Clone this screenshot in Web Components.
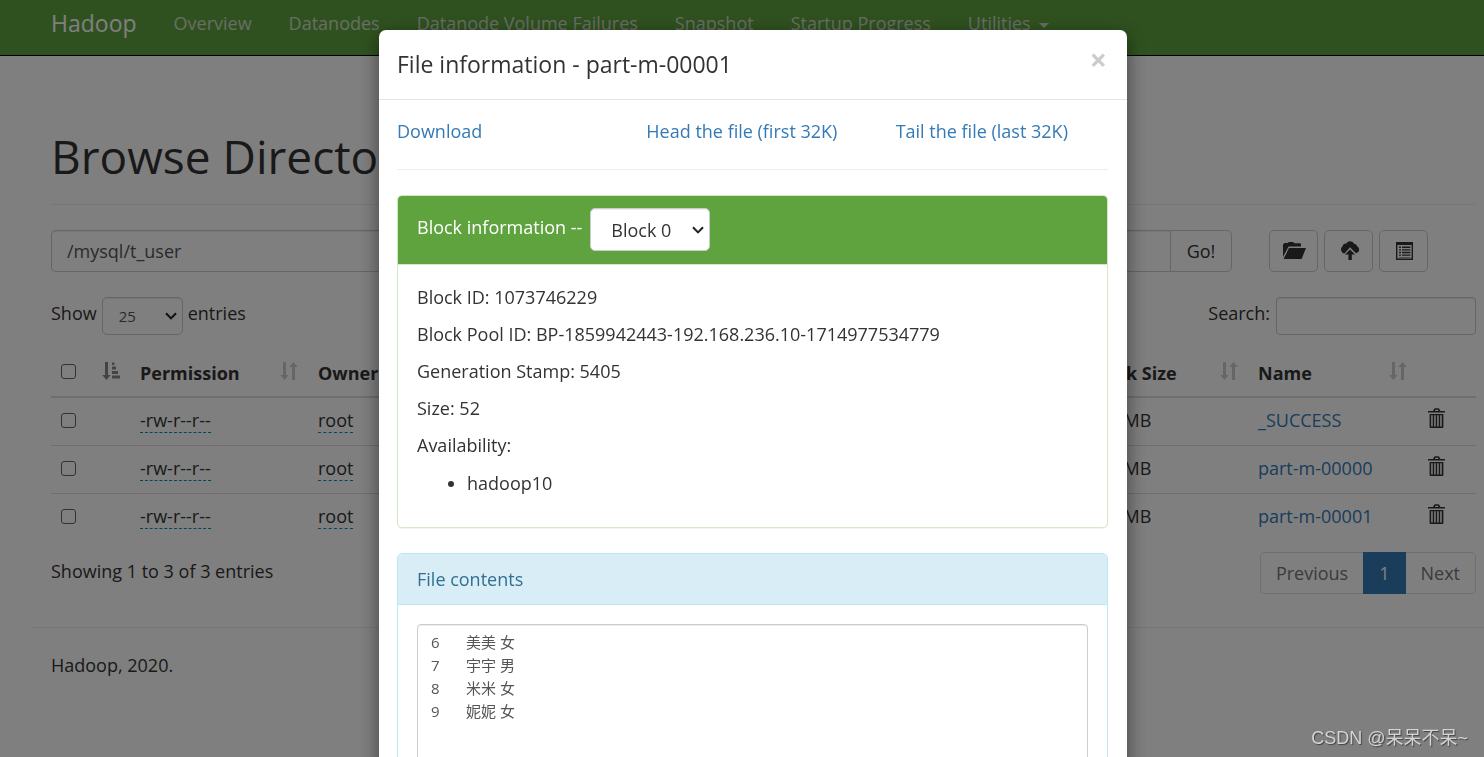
<!DOCTYPE html>
<html lang="en">
<head>
<meta charset="utf-8">
<title>Browsing HDFS</title>
<style>
  html, body { margin: 0; height: 100%; }
  body {
    background: #fff;
    color: #333;
    font: 18px/26px "Open Sans", "Noto Sans", "Noto Sans CJK SC", sans-serif;
    overflow: hidden;
  }
</style>
</head>
<body>
<hdfs-navbar></hdfs-navbar>
<hdfs-explorer></hdfs-explorer>
<hdfs-modal>
  <span slot="title">File information - part-m-00001</span>
  <hdfs-file-info></hdfs-file-info>
</hdfs-modal>
<csdn-mark>CSDN @呆呆不呆~</csdn-mark>

<script>
const define = (name, html, setup) => {
  const tpl = document.createElement('template');
  tpl.innerHTML = html;
  customElements.define(name, class extends HTMLElement {
    constructor() {
      super();
      this.attachShadow({ mode: 'open' }).append(tpl.content.cloneNode(true));
    }
    connectedCallback() { if (setup) setup(this, this.shadowRoot); }
  });
};

const ICONS = {
  folder: [24, 18, '<path d="M0 15V2.5L1.5 1H4.5L6 0H10L11.5 1.2H17Q18 1.2 18 2.4V4.4H5.6L1 13Z"/><path d="M6 6H23L18.6 17H.6Z"/>'],
  upload: [20, 20, '<path d="M4.5 12.5A4 4 0 0 1 2.6 5.3 3.4 3.4 0 0 1 6.2 2.4 4.6 4.6 0 0 1 14.2 2.7 3.8 3.8 0 0 1 17.2 5.2 3.8 3.8 0 0 1 16 12.3L10 6.2Z"/><path d="M10 8.4L15 13.6H11.8V19H8.4V13.6H5Z"/>'],
  list: [18, 18, '<path fill-rule="evenodd" d="M0 0H17V18H0ZM1.4 3V16.6H15.6V3Z"/><path d="M3 4.6H5V6H3ZM6 4.6H14.4V6H6ZM3 7.2H5V8.6H3ZM6 7.2H14.4V8.6H6ZM3 9.8H5V11.2H3ZM6 9.8H14.4V11.2H6ZM3 12.4H5V13.8H3ZM6 12.4H14.4V13.8H6ZM3 15H14.4V15.6H3Z"/>'],
  trash: [18, 20, '<path fill-rule="evenodd" d="M0 3H5L6.2 .8Q6.5 .2 7.2 .2H10.2Q10.9 .2 11.2 .8L12.4 3H17V4.6H0ZM6.8 3H10.6L9.8 1.7H7.6Z"/><path fill-rule="evenodd" d="M1.6 6H15.4V19Q15.4 20 14.4 20H2.6Q1.6 20 1.6 19ZM3.2 7.2V18.4H4.7V7.2ZM6.2 7.2V18.4H7.7V7.2ZM9.2 7.2V18.4H10.7V7.2ZM12.2 7.2V18.4H13.7V7.2Z"/>'],
  sort: [18, 18, '<path d="M3 0H6V13H8.6L4.5 18 .2 13H3ZM12 18H15V5H17.8L13.5 0 9.4 5H12Z"/>'],
  sorted: [18, 18, '<path d="M3 0H6V13H8.6L4.5 18 .2 13H3ZM10 .5H12.4V3H10ZM10 4.5H14V7.4H10ZM10 9H16V12H10ZM10 13.4H18V16.6H10Z"/>'],
  chevron: [12, 8, '<path d="M1 1.2L6 6.4 11 1.2" fill="none" stroke="currentColor" stroke-width="2"/>']
};

customElements.define('hdfs-icon', class extends HTMLElement {
  constructor() { super(); this.attachShadow({ mode: 'open' }); }
  connectedCallback() {
    const [w, h, d] = ICONS[this.getAttribute('name')];
    this.shadowRoot.innerHTML = `<style>:host{display:inline-block;line-height:0}svg{display:block;fill:currentColor}</style>
      <svg width="${w}" height="${h}" viewBox="0 0 ${w} ${h}" aria-hidden="true">${d}</svg>`;
  }
});

define('hdfs-select', `
<style>
  :host { display: inline-block; position: relative; }
  select {
    appearance: none; box-sizing: border-box; display: block;
    width: var(--w, 120px); height: var(--h, 43px); padding: 0 var(--pad, 20px);
    border: 1px solid #ccc; border-radius: 5px; background: #fff; color: inherit;
    font: inherit; font-size: var(--fs, 18px);
    box-shadow: inset 0 1px 1px rgba(0,0,0,.075);
  }
  hdfs-icon { position: absolute; right: 6px; top: 50%; transform: translateY(-50%); pointer-events: none; color: #222; }
</style>
<select></select><hdfs-icon name="chevron"></hdfs-icon>`,
(host, root) => {
  const s = root.querySelector('select');
  s.setAttribute('aria-label', host.getAttribute('label'));
  s.innerHTML = host.getAttribute('options').split(',').map(o => `<option>${o}</option>`).join('');
});

define('hdfs-navbar', `
<style>
  :host { display: block; background: #5fa33e; border-bottom: 1px solid #000; }
  nav { display: flex; align-items: center; gap: 37px; height: 55px; padding-left: 51px; box-sizing: border-box; padding-bottom: 9px; white-space: nowrap; }
  a { color: #d0dcc9; text-decoration: none; }
  .brand { font-size: 23px; color: #fff; }
  .drop { display: flex; align-items: center; gap: 8px; }
  .caret { border: 5px solid transparent; border-top-color: currentColor; border-bottom: 0; margin-top: 4px; }
</style>
<nav>
  <a class="brand" href="#">Hadoop</a>
  <a href="#overview">Overview</a>
  <a href="#datanodes">Datanodes</a>
  <a href="#failures">Datanode Volume Failures</a>
  <a href="#snapshot">Snapshot</a>
  <a href="#startup">Startup Progress</a>
  <a class="drop" href="#utilities">Utilities<span class="caret"></span></a>
</nav>`);

define('hdfs-file-table', `
<style>
  :host { display: block; }
  table { width: 100%; border-collapse: collapse; table-layout: fixed; }
  th, td { text-align: left; white-space: nowrap; box-sizing: border-box; }
  th { height: 45px; padding: 7px 10px 9px; border-bottom: 2px solid #ddd; }
  td { height: 48px; padding: 9px 10px 11px; border-top: 1px solid #ddd; }
  tbody tr:first-child td { border-top: 0; }
  .head { display: flex; justify-content: space-between; align-items: center; }
  .head hdfs-icon { color: #ccc; padding-bottom: 4px; }
  .head input { margin-bottom: 4px; }
  .head hdfs-icon[name=sorted] { color: #888; }
  input { appearance: none; display: block; margin: 0; width: 15px; height: 15px; box-sizing: border-box; border: 1px solid #666; border-radius: 3px; background: #fff; }
  a { color: #337ab7; text-decoration: none; }
  .edit { border-bottom: 1px dashed #08c; display: inline-block; line-height: 24px; }
  button { display: block; border: 0; padding: 0; background: none; color: #333; }
  td.end { padding: 0 11px 3px; }
</style>
<table>
  <colgroup>
    <col style="width:79px"><col style="width:178px"><col style="width:130px"><col style="width:130px">
    <col style="width:110px"><col><col style="width:180px"><col style="width:170px"><col style="width:169px"><col style="width:59px">
  </colgroup>
  <thead><tr></tr></thead>
  <tbody></tbody>
</table>`,
(host, root) => {
  const heads = ['Permission', 'Owner', '', '', '', '', 'Block Size', 'Name'];
  root.querySelector('thead tr').innerHTML =
    '<th><div class="head"><input type="checkbox" aria-label="Select all"><hdfs-icon name="sorted"></hdfs-icon></div></th>' +
    heads.map(h => `<th><div class="head"><span>${h}</span><hdfs-icon name="sort"></hdfs-icon></div></th>`).join('') + '<th></th>';
  root.querySelector('tbody').innerHTML = ['_SUCCESS', 'part-m-00000', 'part-m-00001'].map(name => `<tr>
    <td><input type="checkbox" aria-label="Select ${name}"></td>
    <td><span class="edit">-rw-r--r--</span></td><td><span class="edit">root</span></td>
    <td></td><td></td><td></td><td></td><td>128 MB</td>
    <td><a href="#${name}">${name}</a></td>
    <td class="end"><button aria-label="Delete ${name}"><hdfs-icon name="trash"></hdfs-icon></button></td></tr>`).join('');
});

define('hdfs-explorer', `
<style>
  :host { display: block; }
  main { padding: 73px 8px 0 51px; }
  h1 { margin: 0; font-size: 46px; font-weight: 400; line-height: 54px; padding-bottom: 21px; border-bottom: 1px solid #eee; }
  .bar { display: flex; margin-top: 25px; }
  .path { flex: 1; display: flex; }
  input { box-sizing: border-box; border: 1px solid #ccc; font: inherit; color: #555; background: #fff; box-shadow: inset 0 1px 1px rgba(0,0,0,.075); padding: 0 15px; }
  .path input { flex: 1; min-width: 0; height: 42px; border-radius: 5px 0 0 5px; border-right: 0; }
  button { box-sizing: border-box; height: 42px; border: 1px solid #ccc; border-radius: 5px; background: #fff; color: #333; font: inherit; padding: 0; display: flex; align-items: center; justify-content: center; }
  .path button { width: 62px; border-radius: 0 5px 5px 0; }
  .tools { display: flex; gap: 6px; margin: 0 48px 0 37px; }
  .tools button { width: 49px; }
  .tools hdfs-icon { padding-left: 2px; }
  .filter { display: flex; justify-content: space-between; margin-top: 25px; }
  .filter > div, .filter label { display: flex; gap: 5px; line-height: 32px; }
  .filter label { gap: 6px; }
  .filter input { width: 200px; height: 38px; border-radius: 4px; }
  hdfs-select { --w: 81px; --h: 38px; --fs: 15px; --pad: 16px; color: #555; }
  hdfs-file-table { margin-top: 17px; }
  .foot { display: flex; justify-content: space-between; margin-top: 11px; line-height: 38px; }
  .pages { display: flex; line-height: 40px; }
  .pages a { padding: 0 15px; border: 1px solid #ddd; color: #777; text-decoration: none; }
  .pages a:first-child { border-radius: 5px 0 0 5px; border-right: 0; }
  .pages a:last-child { border-radius: 0 5px 5px 0; border-left: 0; }
  .pages a.on { background: #337ab7; border-color: #337ab7; color: #fff; }
  footer { margin: 33px 0 0 32px; padding: 24px 19px; border-top: 1px solid #eee; }
</style>
<main>
  <h1>Browse Directory</h1>
  <div class="bar">
    <div class="path"><input type="text" value="/mysql/t_user" aria-label="Directory"><button>Go!</button></div>
    <div class="tools">
      <button aria-label="Create directory"><hdfs-icon name="folder"></hdfs-icon></button>
      <button aria-label="Upload files"><hdfs-icon name="upload"></hdfs-icon></button>
      <button aria-label="Cut and paste"><hdfs-icon name="list"></hdfs-icon></button>
    </div>
  </div>
  <div class="filter">
    <div><span>Show</span><hdfs-select label="Entries shown" options="25,50,100"></hdfs-select><span>entries</span></div>
    <label for="q">Search: <input id="q" type="search"></label>
  </div>
  <hdfs-file-table></hdfs-file-table>
  <div class="foot">
    <span>Showing 1 to 3 of 3 entries</span>
    <div class="pages"><a href="#prev">Previous</a><a class="on" href="#1">1</a><a href="#next">Next</a></div>
  </div>
</main>
<footer>Hadoop, 2020.</footer>`);

define('hdfs-modal', `
<style>
  :host { position: fixed; inset: 0; display: flex; justify-content: center; align-items: flex-start; padding: 30px 0 0 22px; background: rgba(0,0,0,.5); overflow: hidden; }
  section { width: 748px; max-width: 100%; background: #fff; border-radius: 7px; box-shadow: 0 6px 19px rgba(0,0,0,.5); }
  header { display: flex; justify-content: space-between; align-items: flex-start; padding: 17px 20px 18px 18px; border-bottom: 1px solid #e5e5e5; }
  h2 { margin: 0; font-size: 23px; line-height: 34px; font-weight: 400; }
  button { border: 0; background: none; padding: 0; color: #ccc; font: 700 30px/26px "Open Sans", sans-serif; }
  .body { padding: 18px 19px 18px 18px; }
</style>
<section role="dialog" aria-modal="true">
  <header><h2><slot name="title"></slot></h2><button aria-label="Close">×</button></header>
  <div class="body"><slot></slot></div>
</section>`);

define('hdfs-panel', `
<style>
  :host { display: block; border: 1px solid var(--line, #ddd); border-radius: 5px; box-shadow: 0 1px 1px rgba(0,0,0,.05); background: #fff; overflow: hidden; }
  :host(.block) { --fill: #5fa33e; --ink: #fff; --line: #d6e9c6; }
  :host(.file) { --fill: #d9edf7; --ink: #31708f; --line: #bce8f1; }
  .head { padding: 12px 19px; background: var(--fill); color: var(--ink); border-bottom: 1px solid var(--line); }
  .body { padding: 19px; }
</style>
<div class="head"><slot name="head"></slot></div>
<div class="body"><slot></slot></div>`);

define('hdfs-file-info', `
<style>
  :host { display: block; }
  .links { display: grid; grid-template-columns: repeat(3, 1fr); column-gap: 37px; padding-bottom: 25px; border-bottom: 1px solid #eee; white-space: nowrap; }
  a { color: #337ab7; text-decoration: none; }
  hdfs-panel { margin-top: 25px; }
  .title { display: flex; gap: 8px; padding-bottom: 1px; }
  .title span { line-height: 38px; }
  .title hdfs-select { color: #333; }
  .facts { display: grid; gap: 11px; line-height: 26px; }
  p { margin: 0; }
  ul { margin: 1px 0 12px; padding-left: 50px; }
  textarea { display: block; box-sizing: border-box; width: 100%; height: 260px; padding: 6px 13px; border: 1px solid #ccc; border-radius: 4px; box-shadow: inset 0 1px 1px rgba(0,0,0,.075); resize: none; color: #555; font: inherit; font-size: 15px; line-height: 23px; tab-size: 35px; }
</style>
<div class="links">
  <a href="#download">Download</a>
  <a href="#head">Head the file (first 32K)</a>
  <a href="#tail">Tail the file (last 32K)</a>
</div>
<hdfs-panel class="block">
  <div slot="head" class="title"><span>Block information --</span><hdfs-select label="Block information" options="Block 0"></hdfs-select></div>
  <div class="facts">
    <p>Block ID: 1073746229</p>
    <p>Block Pool ID: BP-1859942443-192.168.236.10-1714977534779</p>
    <p>Generation Stamp: 5405</p>
    <p>Size: 52</p>
    <p>Availability:</p>
    <ul><li>hadoop10</li></ul>
  </div>
</hdfs-panel>
<hdfs-panel class="file">
  <span slot="head">File contents</span>
  <textarea aria-label="File contents" readonly>6&#9;美美 女
7&#9;宇宇 男
8&#9;米米 女
9&#9;妮妮 女
</textarea>
</hdfs-panel>`);

define('csdn-mark', `
<style>
  :host { position: fixed; right: 16px; bottom: 6px; font: 18px/26px "Liberation Sans", "Noto Sans CJK SC", sans-serif; color: #d4d4d4; text-shadow: 1px 1px 1px #444; white-space: nowrap; }
</style>
<slot></slot>`);
</script>
</body>
</html>
